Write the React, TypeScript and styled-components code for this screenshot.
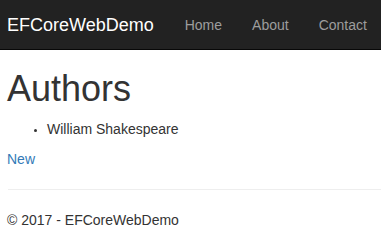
import styled, { createGlobalStyle } from 'styled-components'

const GlobalStyle = createGlobalStyle`
  * { box-sizing: border-box; }
  html, body { margin: 0; padding: 0; background: #fff; }
  body {
    font-family: "Liberation Sans", Arial, Helvetica, sans-serif;
    font-size: 14px;
    line-height: 20px;
    color: #333;
  }
`

const Navbar = styled.nav`
  display: flex;
  align-items: flex-start;
  height: 50px;
  background: #222;
  border-bottom: 1px solid #080808;
  padding-left: 7px;
  overflow: hidden;
`

const Brand = styled.a`
  display: block;
  padding: 15px 0;
  font-size: 18px;
  line-height: 20px;
  color: #fff;
  text-decoration: none;
  margin-right: 16px;
  white-space: nowrap;
`

const NavList = styled.ul`
  display: flex;
  list-style: none;
  margin: 0;
  padding: 0;
`

const NavLink = styled.a`
  display: block;
  padding: 15px 15px;
  color: #9d9d9d;
  text-decoration: none;
  white-space: nowrap;
`

const Body = styled.main`
  padding: 0 0 0 7px;
`

const Title = styled.h1`
  margin: 19px 0 10px;
  font-size: 36px;
  font-weight: 500;
  line-height: 1.1;
`

const List = styled.ul`
  margin: 0 0 10px;
  padding-left: 40px;
`

const Item = styled.li`
  &::marker {
    font-size: 10px;
  }
`

const Para = styled.p`
  margin: 0 0 10px;
`

const Link = styled.a`
  color: #337ab7;
  text-decoration: none;
`

const Rule = styled.hr`
  margin: 20px 0 20px 1px;
  border: 0;
  border-top: 1px solid #eee;
`

const links = ['Home', 'About', 'Contact']

export default function App() {
  return (
    <>
      <GlobalStyle />
      <Navbar>
        <Brand href="#">EFCoreWebDemo</Brand>
        <NavList>
          {links.map((l) => (
            <li key={l}>
              <NavLink href="#">{l}</NavLink>
            </li>
          ))}
        </NavList>
      </Navbar>
      <Body>
        <Title>Authors</Title>
        <List>
          <Item>William Shakespeare</Item>
        </List>
        <Para>
          <Link href="#">New</Link>
        </Para>
        <Rule />
        <footer>
          <Para>© 2017 - EFCoreWebDemo</Para>
        </footer>
      </Body>
    </>
  )
}
